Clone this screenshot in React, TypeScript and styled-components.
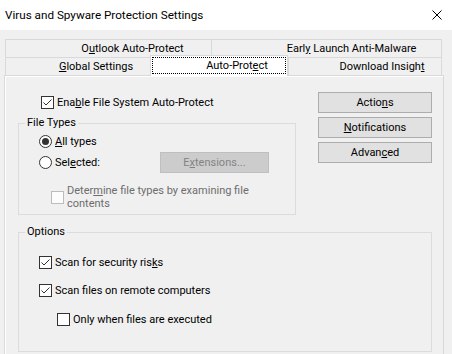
import styled, { createGlobalStyle } from 'styled-components';

const GlobalStyle = createGlobalStyle`
  html, body {
    margin: 0;
    padding: 0;
    background: #f0f0f0;
  }
  body {
    font-family: Roboto, "Liberation Sans", sans-serif;
    font-size: 11px;
    color: #000;
  }
`;

const Window = styled.div`
  width: 452px;
  height: 354px;
  background: #f0f0f0;
  overflow: hidden;
  display: flex;
  flex-direction: column;
`;

const TitleBar = styled.div`
  height: 30px;
  flex: none;
  background: #fff;
  display: flex;
  align-items: center;
  justify-content: space-between;
  padding: 0 10px 0 5px;
`;

const Title = styled.span`
  font-size: 11.7px;
  color: #000;
`;

const Body = styled.div`
  flex: 1;
  display: flex;
  flex-direction: column;
  padding: 9px 0 0 4px;
`;

const TabStrip = styled.div`
  margin-left: 1px;
  display: flex;
  flex-direction: column;
`;

const TabRow = styled.div`
  display: flex;
  height: 18px;
`;

const Tab = styled.div<{ $w: number; $pad: number; $last?: boolean }>`
  box-sizing: border-box;
  width: ${p => p.$w}px;
  height: 18px;
  border-top: 1px solid #d9d9d9;
  border-left: 1px solid #d9d9d9;
  border-right: ${p => (p.$last ? '1px solid #d9d9d9' : 'none')};
  display: flex;
  align-items: center;
  justify-content: center;
  padding-left: ${p => p.$pad}px;
  line-height: 13px;
  white-space: nowrap;
`;

const ActiveTab = styled.div<{ $w: number }>`
  position: relative;
  z-index: 1;
  box-sizing: border-box;
  width: ${p => p.$w}px;
  height: 21px;
  margin-top: -2px;
  background: #fff;
  border: 1px solid #d9d9d9;
  border-bottom: none;
  padding: 1px 1px 2px 1px;
  display: flex;
`;

const FocusRect = styled.div<{ $pad: number }>`
  flex: 1;
  border: 1px dotted #000;
  display: flex;
  align-items: center;
  justify-content: center;
  padding-left: ${p => p.$pad}px;
  line-height: 13px;
  white-space: nowrap;
`;

const Panel = styled.div`
  width: 440px;
  flex: 1;
  box-sizing: border-box;
  border: 1px solid #d9d9d9;
  border-bottom: none;
  box-shadow: inset 1px 1px 0 #fff;
  padding: 16px 0 0 13px;
`;

const PanelGrid = styled.div`
  display: grid;
  grid-template-columns: 277px 114px;
  column-gap: 23px;
`;

const LeftColumn = styled.div`
  display: flex;
  flex-direction: column;
`;

const ButtonColumn = styled.div`
  display: flex;
  flex-direction: column;
  gap: 4px;
`;

const PushButton = styled.div<{ $disabled?: boolean }>`
  box-sizing: border-box;
  height: 21px;
  width: ${p => (p.$disabled ? '109px' : '114px')};
  background: ${p => (p.$disabled ? '#cccccc' : '#e1e1e1')};
  border: 1px solid ${p => (p.$disabled ? '#bfbfbf' : '#adadad')};
  color: ${p => (p.$disabled ? '#838383' : '#000')};
  display: flex;
  align-items: center;
  justify-content: center;
  line-height: 13px;
  white-space: nowrap;
`;

const GroupBox = styled.fieldset<{ $h: number; $w: number; $top: number }>`
  box-sizing: border-box;
  margin: ${p => p.$top}px 0 0 0;
  padding: 0 0 0 20px;
  width: ${p => p.$w}px;
  height: ${p => p.$h}px;
  border: 1px solid #dcdcdc;
  display: flex;
  flex-direction: column;
  min-width: 0;
`;

const GroupLabel = styled.legend`
  margin-left: -14px;
  padding: 0 2px;
  line-height: 14px;
  height: 14px;
`;

const Row = styled.div<{ $top: number; $indent?: number; $h?: number }>`
  display: flex;
  align-items: center;
  gap: 3px;
  height: ${p => p.$h ?? 13}px;
  margin-top: ${p => p.$top}px;
  margin-left: ${p => p.$indent ?? 0}px;
  line-height: 13px;
  white-space: nowrap;
`;

const Label = styled.span<{ $disabled?: boolean }>`
  color: ${p => (p.$disabled ? '#6d6d6d' : '#000')};
  line-height: 13px;
`;

const LabelLines = styled.span`
  display: flex;
  flex-direction: column;
  color: #6d6d6d;
  line-height: 13px;
`;

const Key = styled.u`
  text-decoration: underline;
`;

const Box = styled.span<{ $disabled?: boolean }>`
  box-sizing: border-box;
  flex: none;
  width: 13px;
  height: 13px;
  border: 1px solid ${p => (p.$disabled ? '#bcbcbc' : '#333')};
  background: ${p => (p.$disabled ? '#fcfcfc' : '#fff')};
  display: flex;
`;

const Radio = styled.span`
  box-sizing: border-box;
  flex: none;
  width: 13px;
  height: 13px;
  border: 1px solid #333;
  border-radius: 50%;
  background: #fff;
  display: flex;
  align-items: center;
  justify-content: center;
`;

const RadioDot = styled.span`
  width: 7px;
  height: 7px;
  border-radius: 50%;
  background: #333;
`;

const Spacer = styled.span<{ $w: number }>`
  width: ${p => p.$w}px;
  flex: none;
`;

function Check({ checked, disabled }: { checked?: boolean; disabled?: boolean }) {
  return (
    <Box $disabled={disabled}>
      {checked && (
        <svg width="11" height="11" viewBox="0 0 11 11">
          <polyline points="1.5,5.5 4,8 9.5,2.5" fill="none" stroke="#333" strokeWidth="1" />
        </svg>
      )}
    </Box>
  );
}

function App() {
  return (
    <Window>
      <GlobalStyle />
      <TitleBar>
        <Title>Virus and Spyware Protection Settings</Title>
        <svg width="10" height="10" viewBox="0 0 10 10">
          <path d="M0.5 0.5 L9.5 9.5 M9.5 0.5 L0.5 9.5" stroke="#000" strokeWidth="1" />
        </svg>
      </TitleBar>
      <Body>
        <TabStrip>
          <TabRow>
            <Tab $w={206} $pad={48}><span>O<Key>u</Key>tlook Auto-Protect</span></Tab>
            <Tab $w={231} $pad={50} $last><span>Earl<Key>y</Key> Launch Anti-Malware</span></Tab>
          </TabRow>
          <TabRow>
            <Tab $w={145} $pad={36}><span><Key>G</Key>lobal Settings</span></Tab>
            <ActiveTab $w={138}>
              <FocusRect $pad={36}><span>Auto-Prot<Key>e</Key>ct</span></FocusRect>
            </ActiveTab>
            <Tab $w={154} $pad={34} $last><span>Download Insigh<Key>t</Key></span></Tab>
          </TabRow>
        </TabStrip>
        <Panel>
          <PanelGrid>
            <LeftColumn>
              <Row $top={4} $indent={23}>
                <Check checked />
                <Label>Ena<Key>b</Key>le File System Auto-Protect</Label>
              </Row>
              <GroupBox $w={278} $h={99} $top={7}>
                <GroupLabel>File Types</GroupLabel>
                <Row $top={5}>
                  <Radio><RadioDot /></Radio>
                  <Label><Key>A</Key>ll types</Label>
                </Row>
                <Row $top={4} $h={21}>
                  <Radio />
                  <Label>Sel<Key>e</Key>cted:</Label>
                  <Spacer $w={54} />
                  <PushButton $disabled><span>E<Key>x</Key>tensions...</span></PushButton>
                </Row>
                <Row $top={11} $indent={12} $h={26}>
                  <Check disabled />
                  <LabelLines>
                    <span>Deter<Key>m</Key>ine file types by examining file</span>
                    <span>contents</span>
                  </LabelLines>
                </Row>
              </GroupBox>
            </LeftColumn>
            <ButtonColumn>
              <PushButton><span>Actio<Key>n</Key>s</span></PushButton>
              <PushButton><span><Key>N</Key>otifications</span></PushButton>
              <PushButton><span>Advan<Key>c</Key>ed</span></PushButton>
            </ButtonColumn>
          </PanelGrid>
          <GroupBox $w={414} $h={127} $top={10}>
            <GroupLabel>Options</GroupLabel>
            <Row $top={17}>
              <Check checked />
              <Label>Scan for security ris<Key>k</Key>s</Label>
            </Row>
            <Row $top={15}>
              <Check checked />
              <Label>Scan files on remote computers</Label>
            </Row>
            <Row $top={16} $indent={18}>
              <Check />
              <Label>Only when files are executed</Label>
            </Row>
          </GroupBox>
        </Panel>
      </Body>
    </Window>
  );
}

export default App;
